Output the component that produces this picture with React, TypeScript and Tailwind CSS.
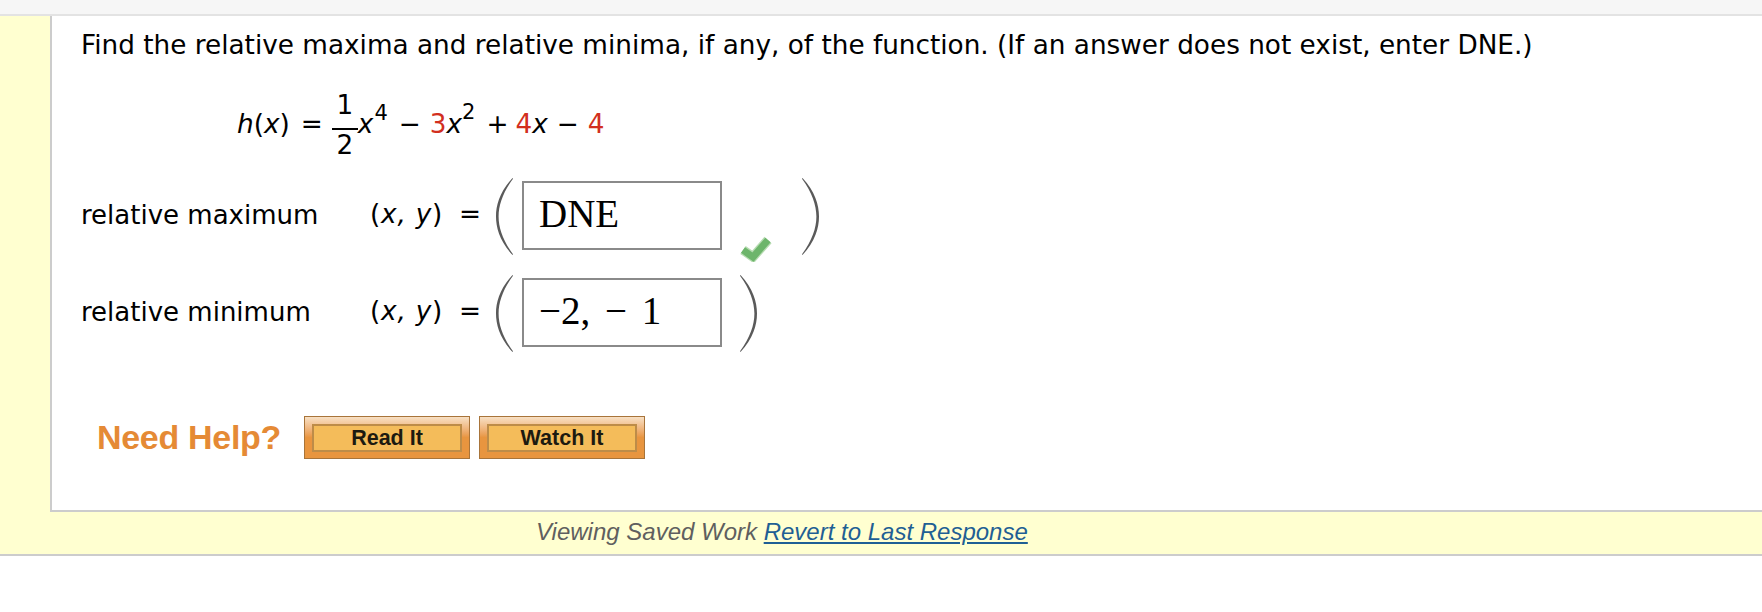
function Paren({ side, className }: { side: "left" | "right"; className: string }) {
  return (
    <svg aria-hidden="true" className={className} viewBox="0 0 18 80" preserveAspectRatio="none">
      <path
        d={
          side === "left"
            ? "M16.5 0C4 14 0 28 0 40S4 66 16.5 80L17 79.300C7 65 2.600 52 2.600 40S7 15 17 .7Z"
            : "M1.500 0C14 14 18 28 18 40S14 66 1.500 80L1 79.300C11 65 15.400 52 15.400 40S11 15 1 .7Z"
        }
        fill="#5a5a5a"
      />
    </svg>
  );
}

function CheckMark() {
  return (
    <svg aria-hidden="true" className="h-[28px] w-[34px]" viewBox="0 0 34 28" fill="none">
      <path d="M5 16L15 23L30 6" stroke="#b7dcb2" strokeWidth="9.500" />
      <path d="M5 16L15 23L30 6" stroke="#6db56b" strokeWidth="7" />
    </svg>
  );
}

function HelpButton({ label }: { label: string }) {
  return (
    <button
      type="button"
      className="h-[43px] w-[166px] border border-[#a8743a] bg-gradient-to-b from-[#f7e0c4] via-[#e8953f] to-[#e8953f] px-[7px] pb-[6px] pt-[7px]"
    >
      <span className="flex h-full w-full items-center justify-center border-2 border-[#bd8c48] bg-[#f4bc5a] font-['Liberation_Sans',sans-serif] text-[21.5px] font-bold text-[#1c1a10]">
        {label}
      </span>
    </button>
  );
}

function AnswerRow({
  label,
  value,
  check,
  className,
}: {
  label: string;
  value: string;
  check?: boolean;
  className: string;
}) {
  return (
    <div className={`flex h-[80px] items-center ${className}`}>
      <span className="w-[289px] text-[26px]">{label}</span>
      <span className="w-[89px] italic tracking-[0.8px]">
        <span className="not-italic">(</span>x, y<span className="not-italic">)</span>
      </span>
      <span className="w-[37px]">=</span>
      <Paren side="left" className="mt-[3px] h-[77px] w-[18px]" />
      <div className="ml-[8px] flex h-[69px] w-[200px] items-center border-2 border-[#8a8a8a] pb-[2px] pl-[15px] font-['Liberation_Serif',serif] text-[39px] text-black [word-spacing:5px]">
        {value}
      </div>
      {check ? (
        <div className="-mb-[7px] ml-[16px] mr-[29px] mt-[59px] flex self-start">
          <CheckMark />
        </div>
      ) : (
        <div className="w-[17px]" />
      )}
      <Paren side="right" className="mt-[3px] h-[77px] w-[18px]" />
    </div>
  );
}

export default function App() {
  return (
    <div className="h-[612px] bg-white font-['DejaVu_Sans',sans-serif] text-[26.3px] text-black">
      <div className="h-[16px] border-b-2 border-[#e3e3e3] bg-[#f6f6f6]" />
      <div className="border-b-2 border-[#cccccc] bg-[#ffffd0]">
        <div className="ml-[50px] h-[496px] border-b-2 border-l-2 border-[#cccccc] bg-white pl-[29px] pt-[13px]">
          <p className="leading-[32px]">
            Find the relative maxima and relative minima, if any, of the function. (If an answer does not exist, enter DNE.)
          </p>

          <div className="ml-[156px] mt-[29px] flex h-[70px] items-center">
            <span className="italic">
              h<span className="not-italic">(</span>x<span className="not-italic">)</span>
            </span>
            <span className="ml-[11px]">=</span>
            <span className="ml-[9px] flex w-[26px] flex-col items-center leading-[30px]">
              <span className="w-full border-b-2 border-black pb-[8px] text-center">1</span>
              <span>2</span>
            </span>
            <span className="italic">x</span>
            <span className="mb-[24px] ml-[1px] text-[21px] leading-none">4</span>
            <span className="ml-[11px]">−</span>
            <span className="ml-[9px] text-[#d22f1e]">3</span>
            <span className="italic">x</span>
            <span className="mb-[25px] text-[21px] leading-none">2</span>
            <span className="ml-[11px]">+</span>
            <span className="ml-[7px] text-[#d22f1e]">4</span>
            <span className="italic">x</span>
            <span className="ml-[9px]">−</span>
            <span className="ml-[9px] text-[#d22f1e]">4</span>
          </div>

          <AnswerRow label="relative maximum" value="DNE" check className="mt-[15px]" />
          <AnswerRow label="relative minimum" value="−2, − 1" className="mt-[17px]" />

          <div className="ml-[16px] mt-[60px] flex items-center">
            <span className="w-[207px] font-['Liberation_Sans',sans-serif] text-[34px] font-bold tracking-[-0.3px] text-[#e58a35]">
              Need Help?
            </span>
            <div className="flex gap-[9px]">
              <HelpButton label="Read It" />
              <HelpButton label="Watch It" />
            </div>
          </div>
        </div>
        <p className="h-[42px] pl-[536px] font-['Liberation_Sans',sans-serif] text-[24px] italic leading-[40px] text-[#5f5f5f]">
          Viewing Saved Work{" "}
          <a href="#" className="text-[#1f5f94] underline">
            Revert to Last Response
          </a>
        </p>
      </div>
    </div>
  );
}
